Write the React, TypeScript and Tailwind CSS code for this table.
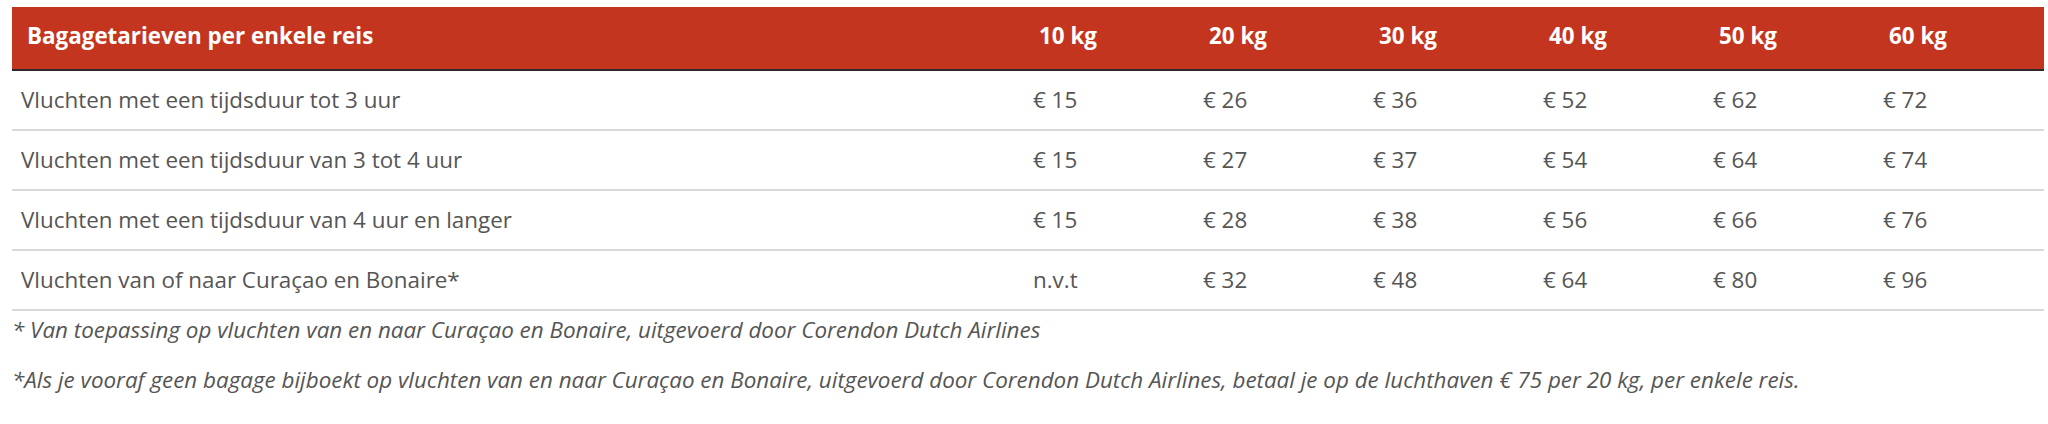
import React from "react";

const headers = ["10 kg", "20 kg", "30 kg", "40 kg", "50 kg", "60 kg"];
const rows: [string, string[]][] = [
  ["Vluchten met een tijdsduur tot 3 uur", ["€ 15", "€ 26", "€ 36", "€ 52", "€ 62", "€ 72"]],
  ["Vluchten met een tijdsduur van 3 tot 4 uur", ["€ 15", "€ 27", "€ 37", "€ 54", "€ 64", "€ 74"]],
  ["Vluchten met een tijdsduur van 4 uur en langer", ["€ 15", "€ 28", "€ 38", "€ 56", "€ 66", "€ 76"]],
  ["Vluchten van of naar Curaçao en Bonaire*", ["n.v.t", "€ 32", "€ 48", "€ 64", "€ 80", "€ 96"]],
];

export default function App() {
  return (
    <div className="w-[2048px] h-[424px] bg-white pt-[7px] pl-[12px] font-['Open_Sans',sans-serif] text-[22.4px] text-[#555]">
      <div className="w-[2032px]">
        <div className="grid grid-cols-[1fr_repeat(6,170px)] h-[64px] bg-[#c4351f] border-b-2 border-[#2a2a2a] text-white font-bold items-center">
          <div className="pl-[15px] pb-[4px]">Bagagetarieven per enkele reis</div>
          {headers.map((h) => (
            <div key={h} className="pl-[15px] pb-[4px]">{h}</div>
          ))}
        </div>
        {rows.map(([label, vals]) => (
          <div
            key={label}
            className="grid grid-cols-[1fr_repeat(6,170px)] h-[60px] border-b-2 border-[#d9d9d9] items-center"
          >
            <div className="pl-[9px]">{label}</div>
            {vals.map((v, i) => (
              <div key={i} className="pl-[9px]">{v}</div>
            ))}
          </div>
        ))}
      </div>
      <p className="italic leading-[30px] mt-[4px]">
        * Van toepassing op vluchten van en naar Curaçao en Bonaire, uitgevoerd door Corendon Dutch Airlines
      </p>
      <p className="italic leading-[30px] mt-[20px]">
        *Als je vooraf geen bagage bijboekt op vluchten van en naar Curaçao en Bonaire, uitgevoerd door Corendon Dutch Airlines, betaal je op de luchthaven € 75 per 20 kg, per enkele reis.
      </p>
    </div>
  );
}
